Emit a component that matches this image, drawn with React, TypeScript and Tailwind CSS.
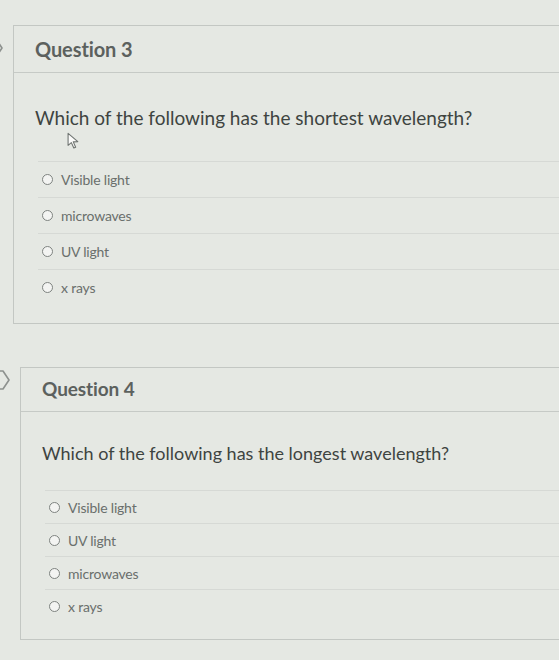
import type { ReactNode } from 'react'

type Layout = {
  left: string
  top: string
  header: string
  title: string
  qText: string
  qPad: string
  inset: string
  listTop: string
  row: string
  bottom: string
  flag: string
}

const q3: Layout = {
  left: 'ml-[10px]',
  top: 'mt-[25px]',
  header: 'h-[47px] pl-[21px]',
  title: 'text-[20px]',
  qText: 'text-[19px]',
  qPad: 'pt-[34px] pb-[21px] pl-[21px]',
  inset: 'ml-[24px]',
  listTop: 'mt-[11px]',
  row: 'h-[36px]',
  bottom: 'h-[18px]',
  flag: 'mt-[12px] -ml-[17px]',
}

const q4: Layout = {
  left: 'ml-[10px]',
  top: 'mt-[43px]',
  header: 'h-[44px] pl-[21px]',
  title: 'text-[19px]',
  qText: 'text-[18px]',
  qPad: 'pt-[30px] pb-[17px] pl-[21px]',
  inset: 'ml-[24px]',
  listTop: 'mt-[9px]',
  row: 'h-[33px]',
  bottom: 'h-[17px]',
  flag: 'mt-[2px] -ml-[10px]',
}

function Flag({ className }: { className: string }) {
  return (
    <svg className={`shrink-0 ${className}`} width="20" height="22" viewBox="0 0 20 22">
      <path d="M1 2 H13 L19 11 L13 20 H1 Z" fill="none" stroke="#8d918e" strokeWidth="1.6" strokeLinejoin="round" />
    </svg>
  )
}

function Cursor() {
  return (
    <svg width="13" height="18" viewBox="0 0 12 16" className="absolute left-[53px] top-[59px]">
      <path d="M1 1 L1 12 L4 9.5 L6.3 14.5 L8 13.7 L5.8 8.8 L10 8.6 Z" fill="#fbfbfa" stroke="#6f7471" strokeWidth="1" strokeLinejoin="round" />
    </svg>
  )
}

function Question({
  num,
  text,
  answers,
  layout,
  extra,
}: {
  num: number
  text: string
  answers: string[]
  layout: Layout
  extra?: ReactNode
}) {
  return (
    <div className={`flex items-start ${layout.top}`}>
      <Flag className={layout.flag} />
      <div className={`w-[580px] shrink-0 border border-r-0 border-[#c3c7c3] ${layout.left}`}>
        <div className={`flex items-center border-b border-[#c6cac6] ${layout.header}`}>
          <h2 className={`${layout.title} font-bold text-[#5c615e] tracking-[-0.1px]`}>Question {num}</h2>
        </div>
        <div className="relative">
          <p className={`${layout.qText} text-[#3e4441] leading-[22px] ${layout.qPad}`}>{text}</p>
          {extra}
          <ul className={`${layout.inset} ${layout.listTop}`}>
            {answers.map((a) => (
              <li
                key={a}
                className={`flex items-center gap-[8px] pl-[4px] border-t border-[#d6d9d5] ${layout.row}`}
              >
                <span className="w-[11px] h-[11px] rounded-full border-[1.5px] border-[#7e8380] bg-[#f3f4f2]" />
                <span className="text-[14px] text-[#6a6f6c] tracking-[-0.2px]">{a}</span>
              </li>
            ))}
          </ul>
          <div className={layout.bottom} />
        </div>
      </div>
    </div>
  )
}

export default function App() {
  return (
    <div
      className="w-[559px] h-[660px] overflow-hidden bg-[#e5e8e3]"
      style={{ fontFamily: 'Lato, "Open Sans", sans-serif' }}
    >
      <Question
        num={3}
        text="Which of the following has the shortest wavelength?"
        answers={['Visible light', 'microwaves', 'UV light', 'x rays']}
        layout={q3}
        extra={<Cursor />}
      />
      <Question
        num={4}
        text="Which of the following has the longest wavelength?"
        answers={['Visible light', 'UV light', 'microwaves', 'x rays']}
        layout={q4}
      />
    </div>
  )
}
